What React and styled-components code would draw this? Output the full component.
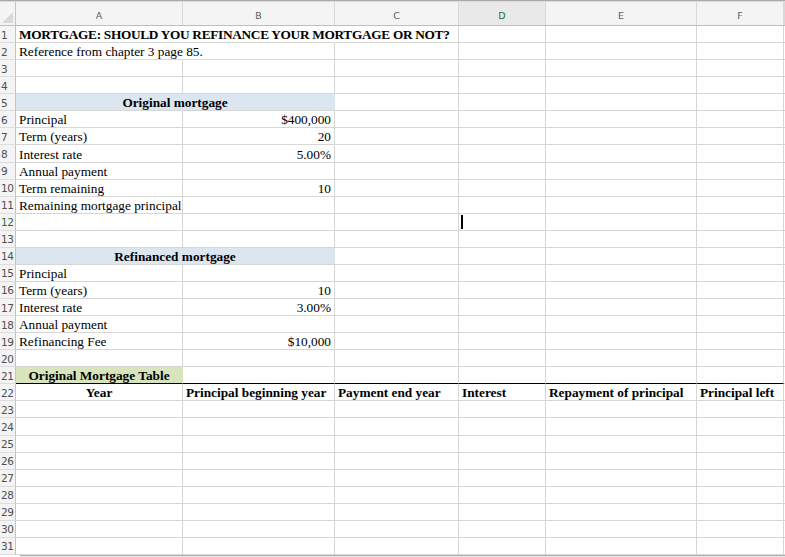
import React from "react";
import styled, { createGlobalStyle, css } from "styled-components";

const COLS = "16px 167px 152px 124px 87px 151px 87px 1fr";
const GRID = "#d6d6d6";

const Global = createGlobalStyle`
  html, body { margin: 0; padding: 0; background: #fff; overflow: hidden; }
  #root { width: 785px; height: 557px; overflow: hidden; }
`;

const Sheet = styled.div`
  width: 785px;
  height: 557px;
  overflow: hidden;
  background: #fff;
  display: flex;
  flex-direction: column;
  border-top: 1px solid #a9a9a9;
  box-sizing: border-box;
`;

const HeaderRow = styled.div`
  display: grid;
  grid-template-columns: ${COLS};
  height: 25px;
  flex: none;
  border-top: 1px solid #dcdcdc;
  border-bottom: 1px solid #bfbfbf;
  box-sizing: border-box;
  background: #f4f4f4;
`;

const Corner = styled.div`
  position: relative;
  border-right: 1px solid #c4c4c4;
  box-sizing: border-box;
  &::after {
    content: "";
    position: absolute;
    right: 2px;
    bottom: 2px;
    width: 0;
    height: 0;
    border-left: 11px solid transparent;
    border-bottom: 11px solid #d9d9d9;
  }
`;

const ColHead = styled.div`
  display: flex;
  align-items: center;
  justify-content: center;
  font-family: "DejaVu Sans", "Liberation Sans", sans-serif;
  font-size: 9.5px;
  color: ${(p) => (p.$active ? "#1e7145" : "#5e5e5e")};
  background: ${(p) => (p.$active ? "#e9e9e9" : "transparent")};
  border-right: 1px solid #d9d9d9;
  box-sizing: border-box;
  padding-top: 3px;
`;

const Body = styled.div`
  flex: none;
  display: flex;
  flex-direction: column;
`;

const Footer = styled.div`
  flex: 1;
  border-top: 1px solid #b4b4b4;
  box-shadow: inset 0 1px 0 #e4e4e4;
  background: #fff;
  margin-left: 20px;
`;

const Row = styled.div`
  display: grid;
  grid-template-columns: ${COLS};
  height: 17.07px;
  flex: none;
`;

const RowNum = styled.div`
  display: flex;
  align-items: center;
  font-family: "DejaVu Sans", "Liberation Sans", sans-serif;
  font-size: 10.5px;
  letter-spacing: -0.4px;
  color: ${(p) => (p.$active ? "#1e7145" : "#505050")};
  background: #f4f4f4;
  border-right: 1px solid #c4c4c4;
  border-bottom: 1px solid #dddddd;
  box-sizing: border-box;
  padding-top: 1px;
  padding-left: 1px;
  overflow: hidden;
  white-space: nowrap;
`;

const Cell = styled.div`
  grid-column: span ${(p) => p.$span || 1};
  display: flex;
  align-items: flex-end;
  justify-content: ${(p) =>
    p.$align === "right" ? "flex-end" : p.$align === "center" ? "center" : "flex-start"};
  padding: 0 3px 0 3px;
  box-sizing: border-box;
  font-family: "Liberation Serif", "Times New Roman", serif;
  font-size: 13.3px;
  font-weight: ${(p) => (p.$bold ? 700 : 400)};
  letter-spacing: ${(p) => (p.$tight ? "-0.3px" : "normal")};
  color: #000;
  white-space: nowrap;
  overflow: visible;
  position: relative;
  z-index: ${(p) => (p.$overflow ? 1 : 0)};
  background: ${(p) => p.$fill || "transparent"};
  border-right: 1px solid ${(p) => (p.$fill ? p.$fill : GRID)};
  border-bottom: 1px solid ${GRID};
  ${(p) =>
    p.$ruleBelow &&
    css`
      border-bottom: 1px solid #000;
    `}
  ${(p) =>
    p.$hideRight &&
    css`
      border-right-color: transparent;
    `}
`;

const CellText = styled.span`
  line-height: 15px;
`;

const Caret = styled.span`
  display: block;
  width: 2px;
  height: 14px;
  background: #000;
  margin: 0 0 1px -1px;
`;

const BLUE = "#dce6f1";
const GREEN = "#d8e4bc";

const rows = [
  [{ t: "MORTGAGE: SHOULD YOU REFINANCE YOUR MORTGAGE OR NOT?", bold: true, tight: true, overflow: true, hideRight: true }, { hideRight: true }, {}, {}, {}, {}],
  [{ t: "Reference from chapter 3 page 85.", overflow: true, hideRight: true }, {}, {}, {}, {}, {}],
  [{}, {}, {}, {}, {}, {}],
  [{}, {}, {}, {}, {}, {}],
  [{ t: "Original mortgage", span: 2, align: "center", bold: true, fill: BLUE }, {}, {}, {}, {}],
  [{ t: "Principal" }, { t: "$400,000", align: "right" }, {}, {}, {}, {}],
  [{ t: "Term (years)" }, { t: "20", align: "right" }, {}, {}, {}, {}],
  [{ t: "Interest rate" }, { t: "5.00%", align: "right" }, {}, {}, {}, {}],
  [{ t: "Annual payment" }, {}, {}, {}, {}, {}],
  [{ t: "Term remaining" }, { t: "10", align: "right" }, {}, {}, {}, {}],
  [{ t: "Remaining mortgage principal", overflow: true }, {}, {}, {}, {}, {}],
  [{}, {}, {}, { caret: true }, {}, {}],
  [{}, {}, {}, {}, {}, {}],
  [{ t: "Refinanced mortgage", span: 2, align: "center", bold: true, fill: BLUE }, {}, {}, {}, {}],
  [{ t: "Principal" }, {}, {}, {}, {}, {}],
  [{ t: "Term (years)" }, { t: "10", align: "right" }, {}, {}, {}, {}],
  [{ t: "Interest rate" }, { t: "3.00%", align: "right" }, {}, {}, {}, {}],
  [{ t: "Annual payment" }, {}, {}, {}, {}, {}],
  [{ t: "Refinancing Fee" }, { t: "$10,000", align: "right" }, {}, {}, {}, {}],
  [{}, {}, {}, {}, {}, {}],
  [
    { t: "Original Mortgage Table", align: "center", bold: true, fill: GREEN, ruleBelow: true },
    { ruleBelow: true },
    { ruleBelow: true },
    { ruleBelow: true },
    { ruleBelow: true },
    { ruleBelow: true },
  ],
  [
    { t: "Year", align: "center", bold: true },
    { t: "Principal beginning year", bold: true },
    { t: "Payment end year", bold: true },
    { t: "Interest", bold: true },
    { t: "Repayment of principal", bold: true },
    { t: "Principal left", bold: true },
  ],
];
while (rows.length < 31) rows.push([{}, {}, {}, {}, {}, {}]);

const letters = ["A", "B", "C", "D", "E", "F"];

export default function App() {
  return (
    <>
      <Global />
      <Sheet>
        <HeaderRow>
          <Corner />
          {letters.map((l) => (
            <ColHead key={l} $active={l === "D"}>
              {l}
            </ColHead>
          ))}
          <ColHead />
        </HeaderRow>
        <Body>
          {rows.map((cells, i) => (
            <Row key={i}>
              <RowNum $active={i === 11}>{i + 1}</RowNum>
              {cells.map((c, j) => (
                <Cell
                  key={j}
                  $span={c.span}
                  $align={c.align}
                  $bold={c.bold}
                  $tight={c.tight}
                  $fill={c.fill}
                  $overflow={c.overflow}
                  $ruleBelow={c.ruleBelow}
                  $hideRight={c.hideRight}
                >
                  {c.caret ? <Caret /> : c.t ? <CellText>{c.t}</CellText> : null}
                </Cell>
              ))}
              <Cell />
            </Row>
          ))}
        </Body>
        <Footer />
      </Sheet>
    </>
  );
}
